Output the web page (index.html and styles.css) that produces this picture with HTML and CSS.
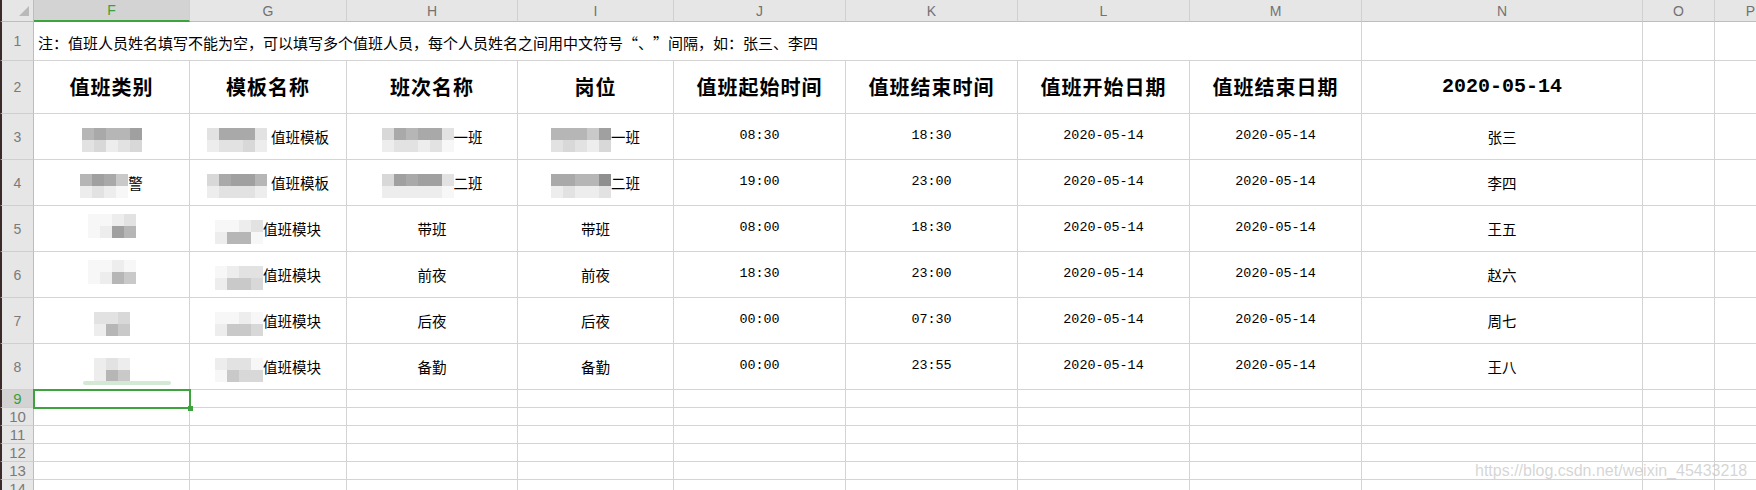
FILE: index.html
```html
<!DOCTYPE html>
<html lang="zh-CN">
<head>
<meta charset="utf-8">
<title>值班表</title>
<link rel="stylesheet" href="styles.css">
</head>
<body>
<div class="sheet">
  <div class="row r-head">
    <div class="corner"><span class="tri"></span></div>
    <div class="ch sel">F</div>
    <div class="ch">G</div>
    <div class="ch">H</div>
    <div class="ch">I</div>
    <div class="ch">J</div>
    <div class="ch">K</div>
    <div class="ch">L</div>
    <div class="ch">M</div>
    <div class="ch">N</div>
    <div class="ch">O</div>
    <div class="ch">P</div>
  </div>

  <div class="row r1">
    <div class="rh">1</div>
    <div class="c note">注：值班人员姓名填写不能为空，可以填写多个值班人员，每个人员姓名之间用中文符号<span class="q">“</span>、<span class="q">”</span>间隔，如：张三、李四</div>
    <div class="c"></div>
    <div class="c"></div>
    <div class="c"></div>
  </div>

  <div class="row r2">
    <div class="rh">2</div>
    <div class="c th">值班类别</div>
    <div class="c th">模板名称</div>
    <div class="c th">班次名称</div>
    <div class="c th">岗位</div>
    <div class="c th">值班起始时间</div>
    <div class="c th">值班结束时间</div>
    <div class="c th">值班开始日期</div>
    <div class="c th">值班结束日期</div>
    <div class="c th thnum">2020-05-14</div>
    <div class="c"></div>
    <div class="c"></div>
  </div>

  <div class="row rd">
    <div class="rh">3</div>
    <div class="c"><span class="mz"><i class="s5"></i><i class="s2"></i><i class="s6"></i><i class="s3"></i><i class="s5"></i><i class="s1"></i><i class="s5"></i><i class="s2"></i><i class="s7"></i><i class="s3"></i></span></div>
    <div class="c"><span class="mz"><i class="s2"></i><i class="s1"></i><i class="s6"></i><i class="s2"></i><i class="s6"></i><i class="s2"></i><i class="s6"></i><i class="s3"></i><i class="s2"></i><i class="s1"></i></span><span class="after">值班模板</span></div>
    <div class="c"><span class="mz"><i class="s3"></i><i class="s1"></i><i class="s6"></i><i class="s2"></i><i class="s5"></i><i class="s2"></i><i class="s6"></i><i class="s1"></i><i class="s6"></i><i class="s2"></i><i class="s2"></i><i class="s0"></i></span><span>一班</span></div>
    <div class="c"><span class="mz"><i class="s5"></i><i class="s2"></i><i class="s5"></i><i class="s3"></i><i class="s5"></i><i class="s2"></i><i class="s4"></i><i class="s1"></i><i class="s7"></i><i class="s3"></i></span><span>一班</span></div>
    <div class="c t">08:30</div>
    <div class="c t">18:30</div>
    <div class="c t">2020-05-14</div>
    <div class="c t">2020-05-14</div>
    <div class="c">张三</div>
    <div class="c"></div>
    <div class="c"></div>
  </div>

  <div class="row rd">
    <div class="rh">4</div>
    <div class="c"><span class="mz"><i class="s5"></i><i class="s1"></i><i class="s7"></i><i class="s2"></i><i class="s6"></i><i class="s1"></i><i class="s4"></i><i class="s0"></i></span><span>警</span></div>
    <div class="c"><span class="mz"><i class="s3"></i><i class="s1"></i><i class="s6"></i><i class="s2"></i><i class="s7"></i><i class="s2"></i><i class="s7"></i><i class="s2"></i><i class="s5"></i><i class="s1"></i></span><span class="after">值班模板</span></div>
    <div class="c"><span class="mz"><i class="s3"></i><i class="s1"></i><i class="s7"></i><i class="s1"></i><i class="s6"></i><i class="s1"></i><i class="s7"></i><i class="s1"></i><i class="s7"></i><i class="s1"></i><i class="s2"></i><i class="s0"></i></span><span>二班</span></div>
    <div class="c"><span class="mz"><i class="s6"></i><i class="s1"></i><i class="s6"></i><i class="s2"></i><i class="s5"></i><i class="s1"></i><i class="s5"></i><i class="s1"></i><i class="s8"></i><i class="s2"></i></span><span>二班</span></div>
    <div class="c t">19:00</div>
    <div class="c t">23:00</div>
    <div class="c t">2020-05-14</div>
    <div class="c t">2020-05-14</div>
    <div class="c">李四</div>
    <div class="c"></div>
    <div class="c"></div>
  </div>

  <div class="row rd">
    <div class="rh">5</div>
    <div class="c"><span class="mz up"><i class="s0"></i><i class="s0"></i><i class="s0"></i><i class="s1"></i><i class="s1"></i><i class="s7"></i><i class="s2"></i><i class="s5"></i></span></div>
    <div class="c"><span class="mz"><i class="s0"></i><i class="s1"></i><i class="s0"></i><i class="s5"></i><i class="s1"></i><i class="s5"></i><i class="s2"></i><i class="s0"></i></span><span>值班模块</span></div>
    <div class="c">带班</div>
    <div class="c">带班</div>
    <div class="c t">08:00</div>
    <div class="c t">18:30</div>
    <div class="c t">2020-05-14</div>
    <div class="c t">2020-05-14</div>
    <div class="c">王五</div>
    <div class="c"></div>
    <div class="c"></div>
  </div>

  <div class="row rd">
    <div class="rh">6</div>
    <div class="c"><span class="mz up"><i class="s0"></i><i class="s0"></i><i class="s0"></i><i class="s1"></i><i class="s1"></i><i class="s5"></i><i class="s0"></i><i class="s4"></i></span></div>
    <div class="c"><span class="mz"><i class="s0"></i><i class="s1"></i><i class="s1"></i><i class="s4"></i><i class="s2"></i><i class="s4"></i><i class="s2"></i><i class="s3"></i></span><span>值班模块</span></div>
    <div class="c">前夜</div>
    <div class="c">前夜</div>
    <div class="c t">18:30</div>
    <div class="c t">23:00</div>
    <div class="c t">2020-05-14</div>
    <div class="c t">2020-05-14</div>
    <div class="c">赵六</div>
    <div class="c"></div>
    <div class="c"></div>
  </div>

  <div class="row rd">
    <div class="rh">7</div>
    <div class="c"><span class="mz"><i class="s2"></i><i class="s1"></i><i class="s2"></i><i class="s5"></i><i class="s3"></i><i class="s4"></i></span></div>
    <div class="c"><span class="mz"><i class="s0"></i><i class="s1"></i><i class="s0"></i><i class="s4"></i><i class="s1"></i><i class="s4"></i><i class="s0"></i><i class="s3"></i></span><span>值班模块</span></div>
    <div class="c">后夜</div>
    <div class="c">后夜</div>
    <div class="c t">00:00</div>
    <div class="c t">07:30</div>
    <div class="c t">2020-05-14</div>
    <div class="c t">2020-05-14</div>
    <div class="c">周七</div>
    <div class="c"></div>
    <div class="c"></div>
  </div>

  <div class="row rd">
    <div class="rh">8</div>
    <div class="c smear-cell"><span class="mz"><i class="s1"></i><i class="s1"></i><i class="s2"></i><i class="s5"></i><i class="s1"></i><i class="s4"></i></span></div>
    <div class="c"><span class="mz"><i class="s1"></i><i class="s0"></i><i class="s2"></i><i class="s4"></i><i class="s2"></i><i class="s3"></i><i class="s0"></i><i class="s3"></i></span><span>值班模块</span></div>
    <div class="c">备勤</div>
    <div class="c">备勤</div>
    <div class="c t">00:00</div>
    <div class="c t">23:55</div>
    <div class="c t">2020-05-14</div>
    <div class="c t">2020-05-14</div>
    <div class="c">王八</div>
    <div class="c"></div>
    <div class="c"></div>
  </div>

  <div class="row re">
    <div class="rh rsel">9</div>
    <div class="c active"></div>
    <div class="c"></div><div class="c"></div><div class="c"></div><div class="c"></div><div class="c"></div>
    <div class="c"></div><div class="c"></div><div class="c"></div><div class="c"></div><div class="c"></div>
  </div>
  <div class="row re">
    <div class="rh">10</div>
    <div class="c"></div><div class="c"></div><div class="c"></div><div class="c"></div><div class="c"></div><div class="c"></div>
    <div class="c"></div><div class="c"></div><div class="c"></div><div class="c"></div><div class="c"></div>
  </div>
  <div class="row re">
    <div class="rh">11</div>
    <div class="c"></div><div class="c"></div><div class="c"></div><div class="c"></div><div class="c"></div><div class="c"></div>
    <div class="c"></div><div class="c"></div><div class="c"></div><div class="c"></div><div class="c"></div>
  </div>
  <div class="row re">
    <div class="rh">12</div>
    <div class="c"></div><div class="c"></div><div class="c"></div><div class="c"></div><div class="c"></div><div class="c"></div>
    <div class="c"></div><div class="c"></div><div class="c"></div><div class="c"></div><div class="c"></div>
  </div>
  <div class="row re">
    <div class="rh">13</div>
    <div class="c"></div><div class="c"></div><div class="c"></div><div class="c"></div><div class="c"></div><div class="c"></div>
    <div class="c"></div><div class="c"></div><div class="c"></div><div class="c"></div><div class="c"></div>
  </div>
  <div class="row re">
    <div class="rh">14</div>
    <div class="c"></div><div class="c"></div><div class="c"></div><div class="c"></div><div class="c"></div><div class="c"></div>
    <div class="c"></div><div class="c"></div><div class="c"></div><div class="c"></div><div class="c"></div>
  </div>

  <div class="wm">https://blog.csdn.net/weixin_45433218</div>
</div>
</body>
</html>
```

FILE: styles.css
```css
* {
  box-sizing: border-box;
  margin: 0;
  padding: 0;
}

html,
body {
  width: 1756px;
  height: 490px;
  overflow: hidden;
  background: #ffffff;
}

.sheet {
  position: relative;
  width: 1787px;
  font-family: "Noto Sans CJK SC", "Noto Sans", sans-serif;
  color: #000000;
}

.row {
  display: grid;
  grid-template-columns: 34px 156px 157px 171px 156px 172px 172px 172px 172px 281px 72px 72px;
}

.r-head { height: 22px; }
.r1 { height: 39px; }
.r2 { height: 53px; }
.rd { height: 46px; }
.re { height: 18px; }

/* column header strip */
.corner {
  display: flex;
  justify-content: flex-end;
  align-items: flex-end;
  padding: 0 4px 5px 0;
  background: #e6e6e6;
  border-left: 2px solid #3a2a2a;
  border-right: 1px solid #bdbdbd;
  border-bottom: 1px solid #bdbdbd;
}

.tri {
  width: 0;
  height: 0;
  border-left: 10px solid transparent;
  border-bottom: 10px solid #b9b9b9;
}

.ch {
  display: flex;
  align-items: center;
  justify-content: center;
  background: #e6e6e6;
  border-right: 1px solid #d0d0d0;
  border-bottom: 1px solid #bdbdbd;
  font-family: "Liberation Sans", Arial, sans-serif;
  font-size: 14px;
  color: #727272;
  line-height: 1;
}

.ch.sel {
  background: #d3d3d3;
  color: #3c9f3c;
  border-bottom: 2px solid #3da43d;
}

/* row header column */
.rh {
  display: flex;
  align-items: center;
  justify-content: center;
  background: #e6e6e6;
  border-left: 2px solid #3a2a2a;
  border-right: 1px solid #bdbdbd;
  border-bottom: 1px solid #cfcfcf;
  font-family: "Liberation Sans", Arial, sans-serif;
  font-size: 14px;
  color: #7a7a7a;
  line-height: 1;
}

.re .rh {
  font-size: 15px;
  overflow: visible;
}

.rh.rsel {
  background: #d3d3d3;
  color: #3c9f3c;
}

/* cells */
.c {
  display: flex;
  align-items: center;
  justify-content: center;
  border-right: 1px solid #d4d4d4;
  border-bottom: 1px solid #d4d4d4;
  font-size: 14.5px;
  line-height: 1.2;
  white-space: nowrap;
}

.note {
  grid-column: span 8;
  justify-content: flex-start;
  padding: 3px 0 0 4px;
  font-size: 15px;
}

.q {
  display: inline-block;
  width: 15px;
  text-align: center;
}

.th {
  font-size: 20px;
  font-weight: 700;
  letter-spacing: 1px;
}

.thnum {
  font-family: "Liberation Mono", "Courier New", monospace;
  font-size: 20px;
  letter-spacing: 0;
}

.t {
  font-family: "Liberation Mono", "Courier New", monospace;
  font-size: 13.4px;
}

/* pixelated (mosaic) redactions */
.mz {
  display: inline-grid;
  grid-template-rows: 12px 12px;
  grid-auto-flow: column;
  grid-auto-columns: 12px;
  margin-top: 6px;
}

.mz.up {
  margin-top: -6px;
}

.mz i {
  display: block;
}

.after {
  margin-left: 4px;
}

.s0 { background: #f7f7f7; }
.s1 { background: #ededed; }
.s2 { background: #e2e2e2; }
.s3 { background: #d8d8d8; }
.s4 { background: #c9c9c9; }
.s5 { background: #b6b6b6; }
.s6 { background: #a9a9a9; }
.s7 { background: #a0a0a0; }
.s8 { background: #8f8f8f; }

.smear-cell {
  position: relative;
}

.smear-cell::after {
  content: "";
  position: absolute;
  left: 49px;
  bottom: 4px;
  width: 88px;
  height: 4px;
  border-radius: 2px;
  background: #d3e9d3;
}

/* active cell selection */
.active {
  position: relative;
  outline: 2px solid #3da43d;
  outline-offset: -1px;
  z-index: 1;
}

.active::after {
  content: "";
  position: absolute;
  right: -4px;
  bottom: -4px;
  width: 5px;
  height: 5px;
  background: #3da43d;
}

/* watermark */
.wm {
  position: absolute;
  left: 1475px;
  top: 463px;
  font-family: "Liberation Sans", Arial, sans-serif;
  font-size: 16px;
  line-height: 1;
  color: rgba(185, 185, 185, 0.6);
  white-space: nowrap;
}
```
